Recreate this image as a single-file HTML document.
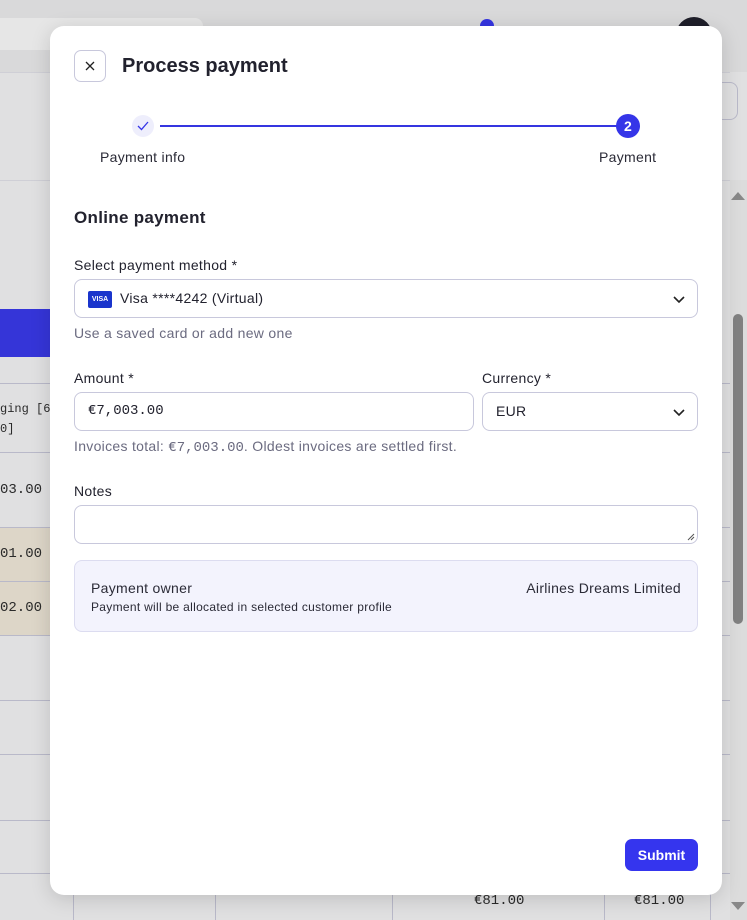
<!DOCTYPE html>
<html><head><style>
*{box-sizing:border-box;margin:0;padding:0}
body{width:747px;height:920px;overflow:hidden;background:#e0e0e1;font-family:"Liberation Sans",sans-serif;position:relative;color:#1f1f2e}
.abs{position:absolute}
.hl{position:absolute;left:0;width:730px;height:1px;background:#b9b9c9}
.mono{font-family:"Liberation Mono",monospace;font-size:14px;color:#2a2a2a}
.dlg{position:absolute;left:50px;top:26px;width:672px;height:869px;background:#fff;border-radius:14px;box-shadow:0 4px 20px rgba(0,0,0,.15);letter-spacing:0.3px}
.lbl{position:absolute;left:24px;font-size:14px;color:#22222e}
.inp{position:absolute;border:1px solid #c8c8dc;border-radius:8px;background:#fff}
.help{position:absolute;left:24px;font-size:14px;color:#6b6b80}
.chev{position:absolute;right:12px;top:14px}
</style></head><body>
<div class="abs" style="left:0;top:0;width:747px;height:72px;background:#d9d9da"></div>
<div class="abs" style="left:0;top:18px;width:203px;height:32px;background:#e6e6e6;border-radius:0 8px 8px 0"></div>
<div class="abs" style="left:480px;top:19px;width:14px;height:14px;border-radius:50%;background:#3535e0"></div>
<div class="abs" style="left:676px;top:17px;width:36px;height:36px;border-radius:50%;background:#1f1f2a"></div>
<div class="abs" style="left:700px;top:82px;width:38px;height:38px;border:1px solid #b9b9c9;border-radius:8px"></div>
<div class="hl" style="top:72px;background:#cfcfd6"></div>
<div class="hl" style="top:180px;background:#cfcfd6"></div>
<div class="abs" style="left:0;top:309px;width:60px;height:48px;background:#3535d8"></div>
<div class="hl" style="top:383px"></div>
<div class="abs mono" style="left:0;top:399px;font-size:12px;line-height:20px">ging [61-<br>0]</div>
<div class="hl" style="top:452px"></div>
<div class="abs mono" style="left:0;top:482px">03.00</div>
<div class="abs" style="left:0;top:527px;width:60px;height:108px;background:#ddd6c8"></div>
<div class="hl" style="top:527px"></div>
<div class="abs mono" style="left:0;top:546px">01.00</div>
<div class="hl" style="top:581px"></div>
<div class="abs mono" style="left:0;top:600px">02.00</div>
<div class="hl" style="top:635px"></div>
<div class="hl" style="top:700px"></div>
<div class="hl" style="top:754px"></div>
<div class="hl" style="top:820px"></div>
<div class="hl" style="top:873px"></div>
<div class="abs" style="left:73px;top:873px;width:1px;height:47px;background:#b9b9c9"></div>
<div class="abs" style="left:215px;top:873px;width:1px;height:47px;background:#b9b9c9"></div>
<div class="abs" style="left:392px;top:873px;width:1px;height:47px;background:#b9b9c9"></div>
<div class="abs" style="left:604px;top:873px;width:1px;height:47px;background:#b9b9c9"></div>
<div class="abs" style="left:710px;top:873px;width:1px;height:47px;background:#b9b9c9"></div>
<div class="abs mono" style="left:474px;top:893px">€81.00</div>
<div class="abs mono" style="left:634px;top:893px">€81.00</div>
<div class="abs" style="left:730px;top:180px;width:17px;height:740px;background:#dcdcdc"></div>
<div class="abs" style="left:733px;top:314px;width:10px;height:310px;background:#808080;border-radius:5px"></div>
<div class="abs" style="left:731px;top:192px;width:0;height:0;border-left:7px solid transparent;border-right:7px solid transparent;border-bottom:8px solid #888"></div>
<div class="abs" style="left:731px;top:902px;width:0;height:0;border-left:7px solid transparent;border-right:7px solid transparent;border-top:8px solid #888"></div>

<div class="dlg">
 <div class="abs" style="left:24px;top:24px;width:32px;height:32px;border:1px solid #c8c8dc;border-radius:7px"></div>
 <svg class="abs" style="left:35px;top:35px" width="10" height="10"><path d="M1 1l8 8M9 1L1 9" stroke="#222" stroke-width="1.3"/></svg>
 <div class="abs" style="left:72px;top:29px;font-size:20px;font-weight:bold;color:#22222e;letter-spacing:0">Process payment</div>
 <div class="abs" style="left:82px;top:89px;width:22px;height:22px;border-radius:50%;background:#eeeefc"></div>
 <svg class="abs" style="left:86px;top:94px" width="14" height="12"><path d="M2 6l3.5 3.5L12 2" stroke="#3535e8" stroke-width="1.3" fill="none"/></svg>
 <div class="abs" style="left:110px;top:99px;width:458px;height:2px;background:#3535e0"></div>
 <div class="abs" style="left:566px;top:88px;width:24px;height:24px;border-radius:50%;background:#3535e8;color:#fff;font-weight:bold;font-size:14px;text-align:center;line-height:24px">2</div>
 <div class="abs" style="left:50px;top:123px;font-size:14px;color:#2a2a36">Payment info</div>
 <div class="abs" style="left:549px;top:123px;font-size:14px;color:#2a2a36">Payment</div>
 <div class="abs" style="left:24px;top:182px;font-size:17px;font-weight:bold;color:#22222e">Online payment</div>
 <div class="lbl" style="top:231px">Select payment method *</div>
 <div class="inp" style="left:24px;top:253px;width:624px;height:39px">
  <div class="abs" style="left:13px;top:11px;width:24px;height:17px;background:#1a35cc;border-radius:2px;color:#fff;font-size:7px;font-weight:bold;text-align:center;line-height:17px;letter-spacing:0">VISA</div>
  <div class="abs" style="left:45px;top:10px;font-size:14px;color:#22222e">Visa ****4242 (Virtual)</div>
  <svg class="chev" width="12" height="10"><path d="M1 3l5 5 5-5" stroke="#222" stroke-width="1.6" fill="none"/></svg>
 </div>
 <div class="help" style="top:299px">Use a saved card or add new one</div>
 <div class="lbl" style="top:344px">Amount *</div>
 <div class="inp" style="left:24px;top:366px;width:400px;height:39px">
  <div class="abs" style="left:13px;top:10px;font-size:14px;font-family:'Liberation Mono',monospace;color:#22222e;letter-spacing:0">€7,003.00</div>
 </div>
 <div class="lbl" style="left:432px;top:344px">Currency *</div>
 <div class="inp" style="left:432px;top:366px;width:216px;height:39px">
  <div class="abs" style="left:13px;top:10px;font-size:14px;color:#22222e">EUR</div>
  <svg class="chev" width="12" height="10"><path d="M1 3l5 5 5-5" stroke="#222" stroke-width="1.6" fill="none"/></svg>
 </div>
 <div class="help" style="top:412px">Invoices total: <span style="font-family:'Liberation Mono',monospace;letter-spacing:0">€7,003.00</span>. Oldest invoices are settled first.</div>
 <div class="lbl" style="top:457px">Notes</div>
 <div class="inp" style="left:24px;top:479px;width:624px;height:39px">
  <svg class="abs" style="right:2px;bottom:2px" width="8" height="8"><path d="M7 1L1 7M7 4L4 7" stroke="#555" stroke-width="1"/></svg>
 </div>
 <div class="abs" style="left:24px;top:534px;width:624px;height:72px;background:#f3f3fd;border:1px solid #dcdcf0;border-radius:8px">
  <div class="abs" style="left:16px;top:19px;font-size:14px;color:#2a2a36">Payment owner</div>
  <div class="abs" style="left:16px;top:39px;font-size:12px;color:#2a2a36">Payment will be allocated in selected customer profile</div>
  <div class="abs" style="right:16px;top:19px;font-size:14px;color:#2a2a36">Airlines Dreams Limited</div>
 </div>
 <div class="abs" style="left:575px;top:813px;width:73px;height:32px;background:#3535ee;border-radius:7px;color:#fff;font-weight:bold;font-size:14px;text-align:center;line-height:32px;letter-spacing:0">Submit</div>
</div>
</body></html>
